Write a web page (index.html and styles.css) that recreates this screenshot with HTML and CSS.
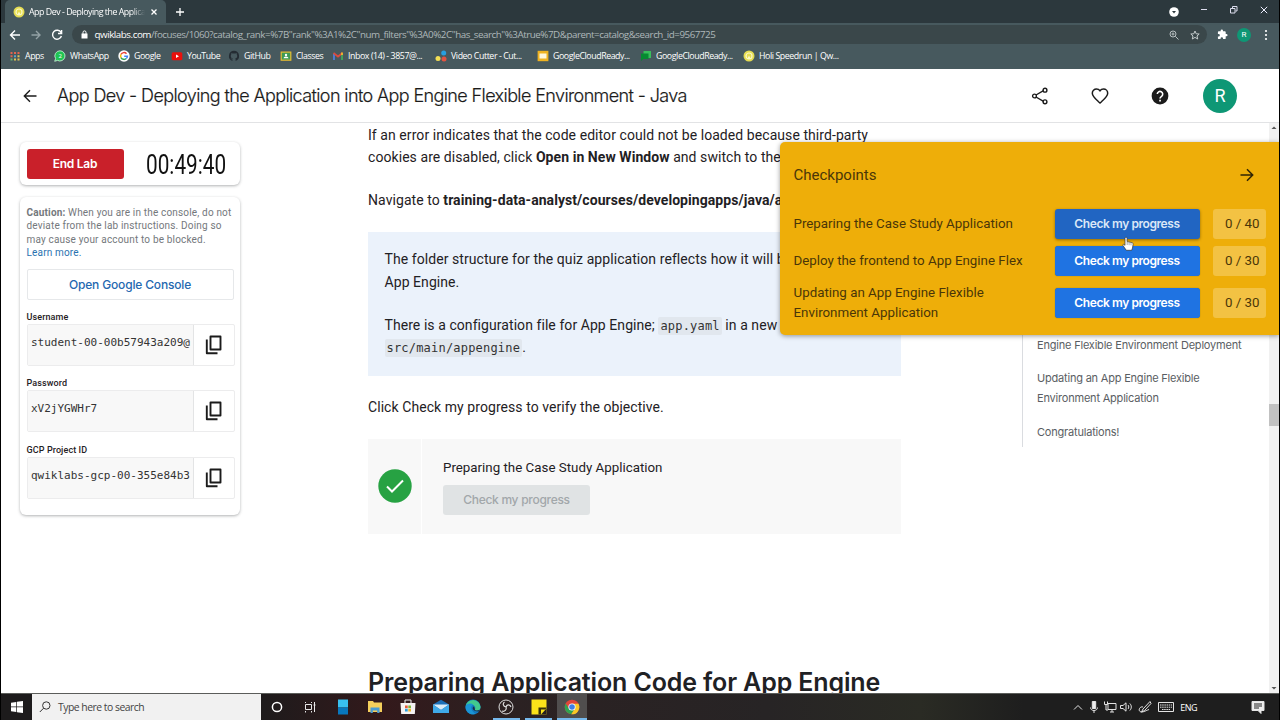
FILE: index.html
```html
<!DOCTYPE html>
<html lang="en">
<head>
    <meta charset="UTF-8">
    <title>App Dev - Deploying the Application</title>
    <link rel="stylesheet" href="styles.css">
</head>
<body>
    <div class="tabs">
        <div class="tab">
            <svg class="coin" viewBox="0 0 12 12"><circle cx="6" cy="6" r="5.5" fill="#e5dc52"/><circle cx="6" cy="6" r="3" fill="none" stroke="#fbf8c4" stroke-width="1.2"/><path d="M5 6.5h2V9H5z" fill="#fbf8c4"/></svg>
            <span class="tab-title">App Dev - Deploying the Applica</span>
            <svg class="close" viewBox="0 0 8 8"><path d="M1.5 1.5l5 5M6.5 1.5l-5 5" stroke="#fff" stroke-width="1.3"/></svg>
        </div>
        <svg class="plus" viewBox="0 0 10 10"><path d="M5 1v8M1 5h8" stroke="#fff" stroke-width="1.3"/></svg>
        <div class="window-buttons">
            <svg width="10" height="10" viewBox="0 0 10 10"><circle cx="5" cy="5" r="4.8" fill="#fff"/><path d="M3 4h4L5 6.5z" fill="#2c383d"/></svg>
            <svg width="8" height="10" viewBox="0 0 8 10"><path d="M1 4.5h6" stroke="#dde" /></svg>
            <svg width="8" height="8" viewBox="0 0 8 8" fill="none" stroke="#dde"><path d="M.5 2.5h4.500v4.500H.5zM2.500 2.500V.5H7v4.500H5.500"/></svg>
            <svg width="8" height="8" viewBox="0 0 8 8"><path d="M.8.8l6.400 6.400M7.200.8L.8 7.200" stroke="#eef"/></svg>
        </div>
    </div>
    <div class="toolbar">
        <div class="nav">
            <svg viewBox="0 0 12 12"><path d="M11 6H2M6 1.500L1.500 6 6 10.500" stroke="#fff"/></svg>
            <svg viewBox="0 0 12 12"><path d="M1.500 6h8M6 2l4 4-4 4" stroke="#93a1a5"/></svg>
            <svg viewBox="0 0 12 12"><path d="M10 3.500A4.500 4.500 0 1 0 10.400 7M10.600 1v3.500H7" stroke="#fff"/></svg>
        </div>
        <div class="url">
            <svg width="7" height="9" viewBox="0 0 7 9"><path d="M.5 3.500h6v5h-6z" fill="#fff"/><path d="M2 4V2.400a1.500 1.500 0 0 1 3 0V4" fill="none" stroke="#fff"/></svg>
            <span class="address"><b>qwiklabs.com</b>/focuses/1060?catalog_rank=%7B"rank"%3A1%2C"num_filters"%3A0%2C"has_search"%3Atrue%7D&amp;parent=catalog&amp;search_id=9567725</span>
            <svg width="10" height="10" viewBox="0 0 10 10" fill="none" stroke="#b6bec0"><circle cx="4" cy="4" r="3"/><path d="M6.300 6.300L9.500 9.500M2.500 4h3M4 2.500v3"/></svg>
            <svg width="10" height="10" viewBox="0 0 10 10" fill="none" stroke="#c4cccd"><path d="M5 1l1.200 2.800 3 .2L7 6l.7 3L5 7.400 2.300 9 3 6 .8 4l3-.2z"/></svg>
        </div>
        <svg class="puzzle" viewBox="0 0 24 24"><path fill="#fff" d="M20.500 11H19V7a2 2 0 0 0-2-2h-4V3.500a2.500 2.500 0 0 0-5 0V5H4a2 2 0 0 0-2 2v3.800h1.500a2.700 2.700 0 0 1 0 5.400H2V20a2 2 0 0 0 2 2h3.800v-1.500a2.700 2.700 0 0 1 5.400 0V22H17a2 2 0 0 0 2-2v-4h1.500a2.500 2.500 0 0 0 0-5z"/></svg>
        <span class="mini-avatar">R</span>
        <svg class="dots" viewBox="0 0 4 12" fill="#fff"><circle cx="2" cy="2" r="1.100"/><circle cx="2" cy="6" r="1.100"/><circle cx="2" cy="10" r="1.100"/></svg>
    </div>
    <div class="bookmarks">
        <span class="bm apps"><svg viewBox="0 0 12 12"><g fill="#e0654f"><path d="M1.500 2h2v2h-2zM5 2h2v2H5zM8.500 2h2v2h-2zM1.500 5.200h2v2h-2z"/></g><path fill="#59a7c9" d="M5 5.200h2v2H5z"/><path fill="#e3c354" d="M8.500 5.200h2v2h-2zM5 8.500h2v2H5zM8.500 8.500h2v2h-2z"/><path fill="#65b574" d="M1.500 8.500h2v2h-2z"/></svg><i>Apps</i></span>
        <span class="bm whatsapp"><svg viewBox="0 0 12 12"><path d="M6 .8a5.100 5.100 0 1 1-2.500 9.600L.7 11.300l.9-2.700A5.100 5.100 0 0 1 6 .8z" fill="#1fc454" stroke="#d6f6df" stroke-width=".8"/><text x="6" y="8.200" font-size="6" text-anchor="middle" fill="#fff">2</text></svg><i>WhatsApp</i></span>
        <span class="bm google"><svg viewBox="0 0 12 12" fill="none" stroke-width="1.500"><circle cx="6" cy="6" r="5.700" fill="#fff"/><path d="M8.500 3.700A3.400 3.400 0 0 0 3 4.400" stroke="#ea4335"/><path d="M3 4.400a3.400 3.400 0 0 0 0 3.200" stroke="#fbbc05"/><path d="M3 7.600a3.400 3.400 0 0 0 5.300.9" stroke="#34a853"/><path d="M8.300 8.500A3.200 3.200 0 0 0 9.400 6.200H6.200" stroke="#4285f4"/></svg><i>Google</i></span>
        <span class="bm youtube"><svg viewBox="0 0 12 12"><rect x=".7" y="2.200" width="10.600" height="8" rx="1.500" fill="#e9100c"/><path d="M5 4.400l3 1.800-3 1.800z" fill="#fff"/></svg><i>YouTube</i></span>
        <span class="bm github"><svg viewBox="0 0 12 12"><path fill="#242c33" d="M6 .8a5.200 5.200 0 0 0-1.600 10.100V9.300c-1.400.3-1.700-.7-1.700-.7l.6-.2 1.100.6.300-.7C2.800 8 2.800 6.700 2.800 5.500l.5-1.300V2.900l1.300.5h2.800l1.300-.5v1.300l.5 1.300c0 1.200 0 2.500-1.900 2.800l.3.700v1.900A5.200 5.200 0 0 0 6 .8z"/></svg><i>GitHub</i></span>
        <span class="bm classes"><svg viewBox="0 0 12 12"><path fill="#e6bd33" d="M.6 1.500h10.800v9.300H.6z"/><path fill="#3d9a55" d="M1.800 2.700h8.400v6.900H1.800z"/><circle cx="6" cy="5" r="1.200" fill="#fff"/><path d="M3.500 8.200a2.500 1.800 0 0 1 5 0z" fill="#fff"/></svg><i>Classes</i></span>
        <span class="bm inbox"><svg viewBox="0 0 12 12" fill="none" stroke-width="1.800"><path d="M2 10V4" stroke="#4f7ddc"/><path d="M10 10V4" stroke="#43a65a"/><path d="M1.500 3L6 6.500 10.500 3" stroke="#db4b3f"/><path d="M10 2.500V5" stroke="#f0b72f"/></svg><i>Inbox (14) - 3857@...</i></span>
        <span class="bm cutter"><svg viewBox="0 0 12 12"><circle cx="8.700" cy="3" r="2.500" fill="#27a0e0"/><circle cx="3" cy="8.600" r="2.500" fill="#f3df55"/><circle cx="9" cy="8.900" r="2.500" fill="#e25441"/></svg><i>Video Cutter - Cut...</i></span>
        <span class="bm slides"><svg viewBox="0 0 12 12"><path fill="#efb322" d="M.6.8h10.800v10.400H.6z"/><path fill="#fff8dd" d="M2.500 3.500h7v5h-7z"/></svg><i>GoogleCloudReady...</i></span>
        <span class="bm chat"><svg viewBox="0 0 12 12"><path fill="#39bf5b" d="M3.500 1H11v7H3.500z"/><path fill="#068a31" d="M1 3.500h7.500V9H3.300L1 11z"/></svg><i>GoogleCloudReady...</i></span>
        <span class="bm holi"><svg viewBox="0 0 12 12"><circle cx="6" cy="6" r="5.500" fill="#e5dc52"/><circle cx="6" cy="6" r="3" fill="none" stroke="#fbf8c4" stroke-width="1.200"/><path d="M5 6.500h2V9H5z" fill="#fbf8c4"/></svg><i>Holi Speedrun | Qw...</i></span>
    </div>

    <header>
        <svg class="back" viewBox="0 0 14 14"><path d="M13.500 7H1.500M7 1.300L1.300 7 7 12.700" fill="none" stroke="#1b1b1b" stroke-width="1.400"/></svg>
        <h1>App Dev - Deploying the Application into App Engine Flexible Environment - Java</h1>
        <svg class="action" viewBox="0 0 18 18" fill="none" stroke="#1b1b1b" stroke-width="1.400"><path d="M5 8l7.500-4.300M5 10l7.500 4.300"/><circle cx="3.500" cy="9" r="1.900"/><circle cx="14" cy="3.200" r="1.900"/><circle cx="14" cy="14.800" r="1.900"/></svg>
        <svg class="action" viewBox="0 0 18 18"><path d="M9 16L7.500 14.700C3.500 11 1.300 9 1.300 6.200A4.200 4.200 0 0 1 5.500 2C7 2 8.200 2.700 9 3.800 9.800 2.700 11 2 12.500 2a4.200 4.200 0 0 1 4.200 4.200c0 2.800-2.200 4.800-6.200 8.500z" fill="none" stroke="#1b1b1b" stroke-width="1.500"/></svg>
        <svg class="action" viewBox="0 0 18 18"><circle cx="9" cy="9" r="8.400" fill="#1b1b1b"/><path d="M6.300 7.100a2.700 2.700 0 1 1 4.300 2.200C9.600 10 9 10.400 9 11.600" fill="none" stroke="#fff" stroke-width="1.600"/><path d="M8.200 12.700h1.700v1.700H8.200z" fill="#fff"/></svg>
        <span class="avatar">R</span>
    </header>

    <main>
        <aside class="sidebar">
            <div class="card timer-card">
                <button class="end">End Lab</button>
                <span class="timer">00:49:40</span>
            </div>
            <div class="card info">
                <p class="caution"><b>Caution:</b> When you are in the console, do not<br>deviate from the lab instructions. Doing so<br>may cause your account to be blocked.<br><a>Learn more.</a></p>
                <button class="console">Open Google Console</button>
                <label>Username</label>
                <div class="field">
                    <code>student-00-00b57943a209@</code>
                    <svg viewBox="0 0 18 20"><path d="M5.500 1.500h10v13h-10zM1.800 4.500v13.800h10.700" fill="none" stroke="#1b1b1b" stroke-width="1.900" stroke-linejoin="round"/></svg>
                </div>
                <label>Password</label>
                <div class="field">
                    <code>xV2jYGWHr7</code>
                    <svg viewBox="0 0 18 20"><path d="M5.500 1.500h10v13h-10zM1.800 4.500v13.800h10.700" fill="none" stroke="#1b1b1b" stroke-width="1.900" stroke-linejoin="round"/></svg>
                </div>
                <label>GCP Project ID</label>
                <div class="field">
                    <code>qwiklabs-gcp-00-355e84b3</code>
                    <svg viewBox="0 0 18 20"><path d="M5.500 1.500h10v13h-10zM1.800 4.500v13.800h10.700" fill="none" stroke="#1b1b1b" stroke-width="1.900" stroke-linejoin="round"/></svg>
                </div>
            </div>
        </aside>

        <article>
            <p>If an error indicates that the code editor could not be loaded because third-party<br>cookies are disabled, click <b>Open in New Window</b> and switch to the</p>
            <p>Navigate to <b>training-data-analyst/courses/developingapps/java/a</b></p>
            <div class="note">
                <p>The folder structure for the quiz application reflects how it will b<br>App Engine.</p>
                <p>There is a configuration file for App Engine; <code>app.yaml</code> in a new<br><code>src/main/appengine</code>.</p>
            </div>
            <p>Click Check my progress to verify the objective.</p>
            <div class="objective">
                <div class="status">
                    <svg viewBox="0 0 34 34"><circle cx="17" cy="17" r="16.700" fill="#27a243"/><path d="M9 17.500l5 5 11-11" fill="none" stroke="#fff" stroke-width="2"/></svg>
                </div>
                <div class="step">
                    <span>Preparing the Case Study Application</span>
                    <button disabled>Check my progress</button>
                </div>
            </div>
            <h2>Preparing Application Code for App Engine</h2>
        </article>

        <nav class="outline">
            <a>Engine Flexible Environment Deployment</a>
            <a>Updating an App Engine Flexible<br>Environment Application</a>
            <a>Congratulations!</a>
        </nav>

        <div class="scrollbar">
            <svg viewBox="0 0 10 10"><path d="M2.500 6L5 3.500 7.500 6z" fill="#555"/></svg>
            <div class="thumb"></div>
            <svg viewBox="0 0 10 10"><path d="M2.500 4L5 6.500 7.500 4z" fill="#555"/></svg>
        </div>

        <section class="checkpoints">
            <div class="cp-head">
                <span>Checkpoints</span>
                <svg viewBox="0 0 14 14"><path d="M.5 7h12M7 1.300L12.700 7 7 12.700" fill="none" stroke="#2f2405" stroke-width="1.500"/></svg>
            </div>
            <div class="cp-grid">
                <span>Preparing the Case Study Application</span><button class="hover">Check my progress</button><em>0 / 40</em>
                <span>Deploy the frontend to App Engine Flex</span><button>Check my progress</button><em>0 / 30</em>
                <span>Updating an App Engine Flexible<br>Environment Application</span><button>Check my progress</button><em>0 / 30</em>
            </div>
            <svg class="pointer" viewBox="0 0 12 15"><path d="M4 1.200c.8 0 1.100.5 1.100 1.200v3.200l4.800 1c.9.200 1.300.8 1.200 1.700L10.500 12l-.8 2.300H4.300L1 9.600c-.6-.9.500-1.700 1.200-1l.8.8v-7C3 1.700 3.300 1.200 4 1.200z" fill="#fff" stroke="#333" stroke-width=".7"/><path d="M5.200 6v3M7.100 6.500v2.700M9 7v2.300" stroke="#555" stroke-width=".5"/></svg>
        </section>
    </main>

    <footer>
        <div class="start"><svg viewBox="0 0 12 12" fill="#fff"><path d="M0 1.700l5.300-.8v4.700H0zM6 .8L12 0v5.600H6zM0 6.300h5.300v4.800L0 10.300zM6 6.300h6V12l-6-.8z"/></svg></div>
        <div class="search">
            <svg viewBox="0 0 12 12" fill="none" stroke="#333"><circle cx="7.300" cy="4.500" r="3.700"/><path d="M4.600 7.200L.8 11"/></svg>
            <span>Type here to search</span>
        </div>
        <div class="task"><svg viewBox="0 0 16 16"><circle cx="8" cy="8" r="4.600" fill="none" stroke="#fff" stroke-width="1.500"/></svg></div>
        <div class="task"><svg viewBox="0 0 16 16" fill="none" stroke="#e8e8e8"><path d="M3.500 5.500h6v5h-6zM3.500 3v1M9.500 3v1M3.500 12v1.500M9.500 12v1.500M12.500 3v10M11.500 6h2"/></svg></div>
        <div class="task"><svg viewBox="0 0 16 16"><path d="M3 .5h10v8H3z" fill="#38c0f0"/><path d="M3 8.500h10v7H3z" fill="#0877bd"/></svg></div>
        <div class="task"><svg viewBox="0 0 16 16"><path d="M1 2h5l1 1.500h8V13H1z" fill="#f5cf5c"/><path d="M3.500 14V8.500h9V14h-2.300v-2.500H5.800V14z" fill="#4a9cd3"/></svg></div>
        <div class="task"><svg viewBox="0 0 16 16"><path d="M5 4V1h6v3" fill="none" stroke="#eee"/><path d="M.5 4h15l-.7 11H1.200z" fill="#f5f2f2"/><path d="M5 6.500h2.700v2.700H5z" fill="#e65a35"/><path d="M8.300 6.500H11v2.700H8.300z" fill="#7bb63c"/><path d="M5 9.800h2.700v2.700H5z" fill="#2a9fdc"/><path d="M8.300 9.800H11v2.700H8.300z" fill="#efb52c"/></svg></div>
        <div class="task"><svg viewBox="0 0 16 16"><path d="M0 5.500L8 .8l8 4.700V14H0z" fill="#1b6fb8"/><path d="M0 5.500h16L8 11z" fill="#d9ecf8"/><path d="M0 14V5.500l8 5.500 8-5.500V14z" fill="#3fa9e8"/></svg></div>
        <div class="task"><svg viewBox="0 0 16 16"><circle cx="8" cy="8" r="7.600" fill="#1377bd"/><path d="M.6 7A7.600 7.600 0 0 1 15.600 8c0 2.500-2 3.600-4 3.600-1.500 0-2.300-.5-1.600-1.400C11 8.500 9.500 5.500 6 5.500 3 5.500 1 6.500.6 7z" fill="#42c98d"/><path d="M.6 7.500C1 4.500 6 3.500 8.300 6 5.500 6.500 5 11 10.500 14.800 5 17 .3 12.500.6 7.500z" fill="#1a94d6"/><path d="M9 7.500c-2 .5-2.500 5 5 5l1-1.800c-3 1.500-6 .5-5-.5z" fill="#1c2f44"/></svg></div>
        <div class="task open"><svg viewBox="0 0 16 16" fill="none" stroke="#ddd"><circle cx="8" cy="8" r="7"/><path d="M8 8C5 7.500 4.500 4.500 6.500 3M8 8c1-3 4.200-2.500 5 0M8 8c1 2.800-1.500 5-4 4" stroke-width="1.200"/></svg></div>
        <div class="task open"><svg viewBox="0 0 16 16"><path d="M.5.500h15V15.500H.5z" fill="#fbe21a"/><path d="M7.500 8.500h8l-1 2H10v5H7.500z" fill="#37310d"/><path d="M15.500 9.500v6H10z" fill="#231f20"/></svg></div>
        <div class="task open active"><svg viewBox="0 0 16 16"><circle cx="8" cy="8" r="7.300" fill="#e0453a"/><path d="M1.600 4.500A7.300 7.300 0 0 0 7.300 15.300L11 9.700H5z" fill="#2fa350"/><path d="M8 4.700h6.500A7.300 7.300 0 0 1 7.300 15.300L11.200 9z" fill="#f9c927"/><circle cx="8" cy="8" r="3.600" fill="#fff"/><circle cx="8" cy="8" r="2.800" fill="#3f7fe6"/></svg></div>
        <div class="tray">
            <svg viewBox="0 0 16 16"><path d="M4 10.500L8 6.500l4 4"/></svg>
            <svg viewBox="0 0 16 16"><path d="M6.300 2.500h3.400v7H6.300z" fill="#eee"/><path d="M4.500 8.500c0 4 7 4 7 0M8 12v2"/></svg>
            <svg viewBox="0 0 16 16"><path d="M6 4.500h8v6H6zM8 13h4M10 10.500V13M2.500 2.500v3h3v-3M4 5.500V11h2"/></svg>
            <svg viewBox="0 0 16 16"><path d="M2.500 6.500H5l3-2.700v8.400L5 9.500H2.500zM10 6c1 1 1 3 0 4M11.800 4.500c2 2 2 5 0 7"/></svg>
            <svg class="pen" viewBox="0 0 16 16"><path d="M13 2.500L6 10l-1.500 3 3-1.500L14 4.500zM6 8c-3-1-5 3-3 4.500s5-.5 9-2"/></svg>
            <svg class="keyboard" viewBox="0 0 18 12"><path d="M1.500 1.500h15v9h-15z"/><path d="M3 4h12M3 6.200h12M5 8.500h8" stroke-dasharray="1.500 .7"/></svg>
            <span>ENG</span>
            <svg class="notice" viewBox="0 0 16 16"><path d="M2 2.500h12v9h-3v3l-3-3H2z" fill="#eee"/><path d="M4 5h8M4 7h8M4 9h5" stroke="#222"/></svg>
        </div>
    </footer>
</body>
</html>
```
FILE: styles.css
```css
* {
    box-sizing: border-box;
}

body {
    margin: 0;
    width: 1280px;
    height: 720px;
    overflow: hidden;
    display: flex;
    flex-direction: column;
    border: solid #000;
    border-width: 0 1px;
    background: #fff;
    color: #1f2124;
    font-family: Roboto, sans-serif;
}

svg {
    display: block;
    flex: none;
}

p, h1, h2 {
    margin: 0;
}

button {
    border: 0;
    padding: 0;
    font: 600 12px Inter, sans-serif;
}

/* browser */
.tabs {
    height: 23px;
    display: flex;
    align-items: center;
    background: #2c383d;
}

.tab {
    display: flex;
    align-items: center;
    align-self: flex-end;
    width: 161px;
    height: 23px;
    margin-left: 4px;
    padding-left: 8px;
    border-radius: 5px 5px 0 0;
    background: #47595e;
}

.coin {
    width: 12px;
}

.tab-title {
    width: 116px;
    margin-left: 4px;
    overflow: hidden;
    white-space: nowrap;
    color: #fff;
    font: 8.8px "Open Sans", sans-serif;
    letter-spacing: -0.46px;
    -webkit-mask-image: linear-gradient(90deg, #000 88%, transparent);
}

.close {
    width: 8px;
    margin-left: 5px;
}

.plus {
    width: 10px;
    margin-left: 9px;
}

.window-buttons {
    display: flex;
    align-items: center;
    gap: 22px;
    margin-left: auto;
    margin-right: 11px;
}

.window-buttons svg {
    margin-top: -3px;
}

.window-buttons svg:first-child {
    margin: 0 -1px 0 0;
}

.toolbar {
    height: 23px;
    display: flex;
    align-items: center;
    background: #47595e;
}

.nav {
    display: flex;
    gap: 9px;
    margin-left: 8px;
}

.nav svg {
    width: 12px;
    fill: none;
    stroke-width: 1.4;
}

.url {
    width: 1135px;
    height: 19px;
    display: flex;
    align-items: center;
    margin-left: 9px;
    padding: 0 7px 0 9px;
    border-radius: 10px;
    background: #3a474a;
}

.address {
    width: 1081px;
    margin-left: 6.5px;
    white-space: nowrap;
    color: #aeb8ba;
    font: 9.8px "Open Sans", sans-serif;
    letter-spacing: -0.465px;
}

.address b {
    font-weight: 400;
    color: #fff;
}

.url .address + svg {
    margin-right: 11px;
}

.puzzle {
    width: 11px;
    margin-left: 10px;
}

.mini-avatar {
    width: 14px;
    height: 14px;
    margin-left: 9px;
    border-radius: 50%;
    background: #0e9775;
    color: #fff;
    font-size: 8px;
    line-height: 14px;
    text-align: center;
}

.dots {
    width: 4px;
    margin-left: 13px;
}

.bookmarks {
    height: 23px;
    display: flex;
    align-items: center;
    padding: 0 0 3px 8px;
    background: #47595e;
}

.bm {
    display: flex;
    align-items: center;
    gap: 4px;
    white-space: nowrap;
    color: #fff;
    font: 8.8px "Open Sans", sans-serif;
    letter-spacing: -0.42px;
}

.bm svg {
    width: 12px;
}

.bm i {
    font-style: normal;
}

.apps { width: 45px; }
.whatsapp { width: 64px; }
.google { width: 53px; }
.youtube { width: 57px; }
.github { width: 52px; }
.classes { width: 52px; }
.inbox { width: 103px; }
.cutter { width: 102px; }
.slides { width: 103px; }
.chat { width: 103px; }

/* page header */
header {
    height: 54px;
    flex: none;
    display: flex;
    align-items: center;
    padding: 0 42px 0 22px;
    border-bottom: 1px solid #e2e3e5;
}

.back {
    width: 14px;
    margin-right: 20px;
}

h1 {
    flex: 1;
    white-space: nowrap;
    color: #1b1b1b;
    font: 300 18px Inter, sans-serif;
    letter-spacing: -0.61px;
    -webkit-text-stroke: 0.2px #1b1b1b;
}

.action {
    width: 18px;
    margin-right: 42px;
}

.avatar {
    width: 34px;
    height: 34px;
    margin-left: -8px;
    border-radius: 50%;
    background: #0e9775;
    color: #fff;
    font-size: 18px;
    line-height: 34px;
    text-align: center;
}

/* page */
main {
    position: relative;
    flex: 1;
    min-height: 0;
    display: flex;
    overflow: hidden;
}

.sidebar {
    width: 220px;
    margin: 19px 0 0 19px;
}

.card {
    border-radius: 6px;
    background: #fff;
    box-shadow: 0 1px 3px rgba(60, 64, 67, .4);
}

.timer-card {
    height: 43px;
    display: flex;
    align-items: center;
    padding: 0 6px;
}

.end {
    width: 97px;
    height: 30px;
    flex: none;
    border-radius: 3px;
    margin-left: .5px;
    background: #c9202a;
    color: #fff;
    letter-spacing: -0.25px;
}

.timer {
    margin: 2px 0 0 22px;
    color: #111;
    font-size: 27px;
    transform: scaleX(.77);
    transform-origin: left;
}

.info {
    height: 318px;
    margin-top: 12px;
    padding: 9px 5px 0 6.5px;
}

.caution {
    height: 54px;
    white-space: nowrap;
    color: #74787c;
    font-size: 10px;
    line-height: 13.4px;
    letter-spacing: 0.17px;
}

.caution a {
    color: #2a72b0;
}

.console {
    width: 207px;
    height: 31px;
    display: block;
    margin-top: 9px;
    border: 1px solid #e6e8ea;
    border-radius: 2px;
    background: #fff;
    color: #2468b0;
    font-weight: 500;
    letter-spacing: -0.17px;
}

label {
    display: block;
    margin-top: 11px;
    font-size: 9px;
    font-weight: 500;
    line-height: 13px;
    letter-spacing: 0.1px;
}

.field {
    height: 42px;
    width: 208px;
    display: flex;
    align-items: center;
    border: 1px solid #ececed;
    border-radius: 2px;
}

.field + label {
    margin-top: 11.3px;
}

.field code {
    width: 166px;
    height: 40px;
    padding-left: 3.5px;
    border-right: 1px solid #e3e4e5;
    background: #f8f8f8;
    color: #333;
    font: 11px/35px "DejaVu Sans Mono", monospace;
    letter-spacing: 0;
}

.field svg {
    width: 18px;
    margin-left: 11px;
}

article {
    width: 533px;
    margin-left: 128px;
    white-space: nowrap;
    font-size: 14px;
    line-height: 22.5px;
    letter-spacing: 0.066px;
}

article > p:first-child {
    margin-top: .5px;
}

article p {
    margin-bottom: 20.5px;
}

article b {
    font-weight: 700;
}

.note {
    height: 144px;
    margin-bottom: 19.5px;
    padding: 16px 16.5px;
    background: #ebf2fb;
}

.note code {
    padding: 2px;
    border-radius: 2px;
    background: #e1e7ee;
    color: #333;
    font: 12px "DejaVu Sans Mono", monospace;
    letter-spacing: 0.2px;
}

.objective {
    height: 95px;
    display: flex;
    background: #f8f8f8;
}

.status {
    width: 54px;
    display: flex;
    align-items: center;
    justify-content: center;
    border-right: 1px solid #fff;
}

.status svg {
    width: 34px;
}

.step {
    display: flex;
    flex-direction: column;
    gap: 5px;
    padding: 18.7px 21px;
    font-size: 13.33px;
    letter-spacing: 0;
}

.step button {
    width: 147px;
    height: 30px;
    border-radius: 3px;
    background: #e0e3e4;
    color: #a2a7aa;
    font-weight: 500;
    letter-spacing: -0.28px;
}

h2 {
    margin-top: 128.5px;
    font: 600 25px/40px Inter, sans-serif;
    letter-spacing: -0.13px;
}

.outline {
    width: 236px;
    height: 290px;
    display: flex;
    flex-direction: column;
    justify-content: flex-end;
    gap: 13.5px;
    margin: 34px 0 0 121px;
    padding: 0 0 5.5px 14px;
    border-left: 1px solid #dadce0;
    white-space: nowrap;
    color: #5a5e63;
    font: 11px/20px Inter, sans-serif;
    letter-spacing: -0.2px;
}

.scrollbar {
    width: 10px;
    display: flex;
    flex-direction: column;
    margin-left: auto;
    background: #f1f1f1;
}

.thumb {
    height: 22px;
    margin: 271px 0 auto;
    background: #c1c1c1;
}

.checkpoints {
    position: absolute;
    top: 19px;
    right: 0;
    width: 499px;
    height: 193px;
    padding: 19px 12px 0 13.5px;
    border-radius: 5px 0 0 5px;
    background: #eeae09;
    box-shadow: 0 1px 5px rgba(0, 0, 0, .4);
    color: #4a3608;
}

.cp-head {
    height: 28px;
    display: flex;
    justify-content: space-between;
    align-items: center;
    padding-right: 13px;
    font-size: 15px;
    letter-spacing: 0;
}

.cp-head svg {
    width: 14px;
}

.cp-grid {
    display: grid;
    grid-template-columns: 248px 145px 53px;
    grid-template-rows: 30px 30px 40px;
    gap: 7px 13px;
    align-items: center;
    margin-top: 19.5px;
    font-size: 13.33px;
    line-height: 20px;
}

.cp-grid button {
    height: 30px;
    border-radius: 3px;
    background: #1f73e2;
    box-shadow: 0 0 1px #5b5a3a;
    color: #fff;
    letter-spacing: -0.42px;
}

.cp-grid .hover {
    background: #2165c2;
    color: #dbe7f7;
    box-shadow: 0 1px 3px rgba(0, 0, 0, .4);
}

.cp-grid em {
    padding-right: 6px;
    border-radius: 3px;
    background: #f3c243;
    font-style: normal;
    line-height: 30px;
    text-align: right;
}

.pointer {
    position: absolute;
    left: 342px;
    top: 94px;
    width: 12px;
}

/* taskbar */
footer {
    height: 27px;
    flex: none;
    display: flex;
    border-top: 1px solid #5b5d5a;
    background: linear-gradient(90deg, #1d1b1c 20%, #33191b 30%, #2b2122 40%, #272425 60%, #2a2b24 72%, #1e1e1e 80%);
}

.start {
    width: 31px;
    display: grid;
    place-items: center;
    background: #1d1b1c;
}

.start svg {
    width: 12px;
}

.search {
    width: 229px;
    display: flex;
    align-items: center;
    gap: 7px;
    padding-left: 7px;
    background: #f1f1f1;
    color: #444;
    font: 10.4px "Open Sans", sans-serif;
    letter-spacing: -0.5px;
}

.search svg {
    width: 12px;
}

.task {
    width: 32.7px;
    display: grid;
    place-items: center;
}

.task svg {
    width: 16px;
}

.open {
    background: linear-gradient(#76b9ed, #76b9ed) center bottom / 27px 2px no-repeat;
}

.active {
    background: linear-gradient(#76b9ed, #76b9ed) center bottom / 30px 2px no-repeat, linear-gradient(#504e4e, #504e4e) center / 30px 100% no-repeat;
}

.tray {
    flex: 1;
    display: flex;
    align-items: center;
    justify-content: flex-end;
    padding-right: 13px;
    color: #fff;
    font: 9px "Open Sans", sans-serif;
    letter-spacing: -0.5px;
}

.tray svg {
    width: 16px;
    fill: none;
    stroke: #e4e4e4;
}

.tray .pen {
    margin-left: 3px;
}

.tray .keyboard {
    width: 18px;
    margin: 0 5px 0 4px;
}

.tray .notice {
    margin-left: 53px;
}
```
